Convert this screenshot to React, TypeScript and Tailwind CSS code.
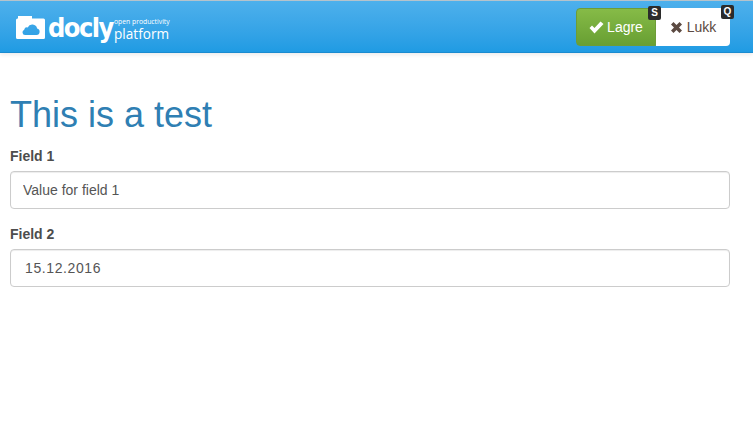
import React from "react";

const sans = "font-['Liberation_Sans',Arial,sans-serif]";

function Logo() {
  return (
    <div className="flex items-center text-white">
      <svg width="29" height="23" viewBox="0 0 29 23" className="ml-[16px] mt-[1px] shrink-0">
        <rect x="2" y="0" width="14" height="3" fill="#fff" />
        <path fillRule="evenodd" fill="#fff" d="M1.5 2.5h26a1.5 1.5 0 0 1 1.5 1.5v17.5a1.5 1.5 0 0 1-1.5 1.5h-26a1.5 1.5 0 0 1-1.5-1.5v-17.500a1.500 1.500 0 0 1 1.500-1.500zM9 19h11.500a3.300 3.300 0 0 0 .6-6.500 5 5 0 0 0-9.400-1.100 3 3 0 0 0-3.500 2.400A2.700 2.700 0 0 0 9 19z" />
      </svg>
      <span className="ml-[3px] mt-[2px] w-[63px] shrink-0 font-['DejaVu_Sans_Condensed','DejaVu_Sans',sans-serif] text-[27px] leading-none font-bold tracking-[-1.6px]">docly</span>
      <div className="ml-[3px] mt-[5px] flex flex-col gap-[1px] font-['Open_Sans',sans-serif]">
        <span className="text-[6.8px] leading-[8px] whitespace-nowrap">open productivity</span>
        <span className="text-[13.6px] leading-[14px] whitespace-nowrap">platform</span>
      </div>
    </div>
  );
}

function Badge({ children, className }: { children: React.ReactNode; className: string }) {
  return (
    <span className={`absolute top-[-3px] z-10 flex h-[14px] w-[13px] items-center justify-center rounded-[2px] bg-[#2b2b2b] text-[10px] font-bold leading-none text-white ${className}`}>
      {children}
    </span>
  );
}

function Field({ label, value, extra }: { label: string; value: string; extra?: string }) {
  return (
    <div className="flex flex-col">
      <label className="mb-[5px] text-[14px] font-bold leading-[20px] text-[#4d4d4d]">{label}</label>
      <input
        readOnly
        value={value}
        className={`h-[38px] w-full rounded-[4px] border border-[#cccccc] bg-white pr-[12px] text-[14px] text-[#555555] shadow-[inset_0_1px_1px_rgba(0,0,0,0.075)] outline-none ${extra ?? "pl-[12px]"}`}
      />
    </div>
  );
}

export default function App() {
  return (
    <div className={`min-h-[432px] bg-white ${sans}`}>
      <header className="flex h-[53px] items-center justify-between border-t border-t-[#b5c3cc] border-b border-b-[#1a8bd0] bg-gradient-to-b from-[#4db0ec] to-[#1f9be3] pr-[23px] shadow-[0_2px_4px_rgba(0,0,0,0.08)]">
        <Logo />
        <div className="mt-[1px] flex h-[38px] w-[154px] text-[14px]">
          <button className="relative flex w-[80px] items-center justify-center gap-[3px] rounded-l-[4px] border border-[#6d9c37] bg-gradient-to-b from-[#86bb47] to-[#689f33] text-white">
            <svg width="15" height="13" viewBox="0 0 15 13"><path d="M0.500 7l2.500-2.500 2.500 2.500 6-6.500 3 2.500-9 9.500z" fill="#fff" /></svg>
            Lagre
            <Badge className="right-[-6px]">S</Badge>
          </button>
          <button className="relative flex flex-1 items-center justify-center gap-[4px] rounded-r-[4px] bg-white text-[#5c4a42]">
            <svg width="13" height="13" viewBox="0 0 13 13"><path d="M1 3.500l2.500-2.500 3 3 3-3 2.500 2.500-3 3 3 3-2.500 2.500-3-3-3 3-2.500-2.500 3-3z" fill="#5c4a42" /></svg>
            Lukk
            <Badge className="right-[-4px]">Q</Badge>
          </button>
        </div>
      </header>
      <main className="w-[730px] pl-[10px]">
        <h1 className="mt-[39px] mb-[9px] text-[36px] leading-[45px] font-normal text-[#2f7fb3]">This is a test</h1>
        <div className="flex flex-col gap-[15px]">
          <Field label="Field 1" value="Value for field 1" />
          <Field label="Field 2" value="15.12.2016" extra="pl-[14px] tracking-[0.6px]" />
        </div>
      </main>
    </div>
  );
}
